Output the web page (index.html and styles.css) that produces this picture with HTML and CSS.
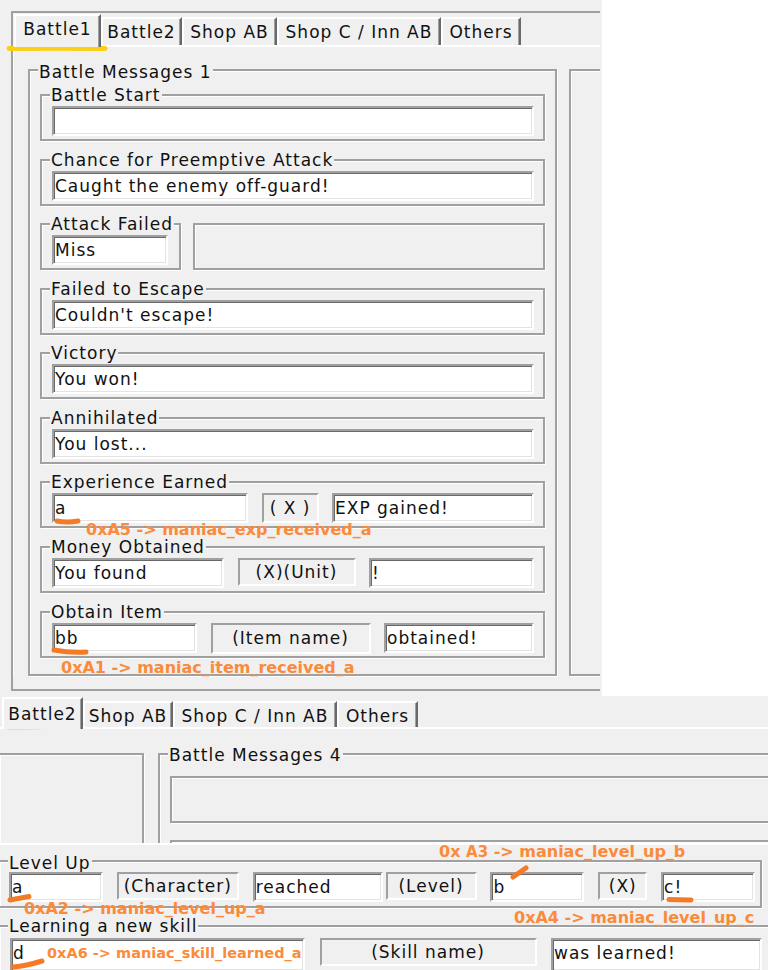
FILE: index.html
```html
<!DOCTYPE html>
<html>
<head>
<meta charset="utf-8">
<title>Battle Messages</title>
<link rel="stylesheet" href="styles.css">
</head>
<body>
<div class="canvas">

  <section class="shot shot1">
    <div class="frame">
      <div class="tabs tabs1">
        <div class="tab sel t1-battle1">Battle1</div>
        <div class="tab t1-battle2">Battle2</div>
        <div class="tab t1-shopab">Shop AB</div>
        <div class="tab t1-shopc">Shop C / Inn AB</div>
        <div class="tab t1-others">Others</div>
      </div>
      <div class="panel panel1">
        <div class="grp main">
          <div class="legend main-legend">Battle Messages 1</div>
          <div class="stack">
            <div class="grp inner">
              <div class="legend">Battle Start</div>
              <div class="row"><div class="edit full"></div></div>
            </div>
            <div class="grp inner">
              <div class="legend">Chance for Preemptive Attack</div>
              <div class="row"><div class="edit full">Caught the enemy off-guard!</div></div>
            </div>
            <div class="pair">
              <div class="grp inner attack">
                <div class="legend">Attack Failed</div>
                <div class="row"><div class="edit miss">Miss</div></div>
              </div>
              <div class="grp inner blank"></div>
            </div>
            <div class="grp inner">
              <div class="legend">Failed to Escape</div>
              <div class="row"><div class="edit full">Couldn't escape!</div></div>
            </div>
            <div class="grp inner">
              <div class="legend">Victory</div>
              <div class="row"><div class="edit full">You won!</div></div>
            </div>
            <div class="grp inner">
              <div class="legend">Annihilated</div>
              <div class="row"><div class="edit full">You lost...</div></div>
            </div>
            <div class="grp inner">
              <div class="legend">Experience Earned</div>
              <div class="row">
                <div class="edit exp-pre">a</div>
                <div class="static exp-x">( X )</div>
                <div class="edit exp-post">EXP gained!</div>
              </div>
            </div>
            <div class="grp inner">
              <div class="legend">Money Obtained</div>
              <div class="row">
                <div class="edit money-pre">You found</div>
                <div class="static money-x">(X)(Unit)</div>
                <div class="edit money-post">!</div>
              </div>
            </div>
            <div class="grp inner">
              <div class="legend">Obtain Item</div>
              <div class="row">
                <div class="edit item-pre">bb</div>
                <div class="static item-x">(Item name)</div>
                <div class="edit item-post">obtained!</div>
              </div>
            </div>
          </div>
        </div>
        <div class="grp side"></div>
      </div>
    </div>
  </section>

  <section class="shot shot2">
    <div class="tabs tabs2">
      <div class="tab sel t2-battle2">Battle2</div>
      <div class="tab t2-shopab">Shop AB</div>
      <div class="tab t2-shopc">Shop C / Inn AB</div>
      <div class="tab t2-others">Others</div>
    </div>
    <div class="panel panel2">
      <div class="grp left-box"></div>
      <div class="grp bm4">
        <div class="legend bm4-legend">Battle Messages 4</div>
        <div class="bm4-stack">
          <div class="grp bm4-inner"></div>
          <div class="grp bm4-inner"></div>
        </div>
      </div>
    </div>
  </section>

  <div class="strip"></div>

  <section class="shot shot3">
    <div class="grp levelup">
      <div class="legend lv-legend">Level Up</div>
      <div class="row lv-row">
        <div class="edit lv-a">a</div>
        <div class="static lv-char">(Character)</div>
        <div class="edit lv-reached">reached</div>
        <div class="static lv-level">(Level)</div>
        <div class="edit lv-b">b</div>
        <div class="static lv-x">(X)</div>
        <div class="edit lv-c">c!</div>
      </div>
    </div>
    <div class="grp skill">
      <div class="legend">Learning a new skill</div>
      <div class="row sk-row">
        <div class="edit sk-d">d</div>
        <div class="static sk-name">(Skill name)</div>
        <div class="edit sk-post">was learned!</div>
      </div>
    </div>
  </section>

  <svg class="marks" width="768" height="970" viewBox="0 0 768 970" aria-hidden="true">
    <g fill="none" stroke-linecap="round">
      <path class="hl" d="M9 48.5 Q56 48 105 48.5"/>
      <path class="hl" d="M9 727 Q52 727.5 81 723.5"/>
      <path class="om" d="M57 521 Q67 523 78 521"/>
      <path class="om" d="M54 650 Q70 653 86 652"/>
      <path class="om" d="M10 900 Q18 898.5 29 896.5"/>
      <path class="om" d="M513 877 L526 868"/>
      <path class="om" d="M669 899.5 L691 900"/>
      <path class="om" d="M13 967 Q26 966 42 961"/>
    </g>
  </svg>

  <div class="note n-exp">0xA5 -&gt; maniac_exp_received_a</div>
  <div class="note n-item">0xA1 -&gt; maniac_item_received_a</div>
  <div class="note n-lvb">0x <span class="a3">A3</span> -&gt; maniac_level_up_b</div>
  <div class="note n-lva">0xA2 -&gt; maniac_level_up_a</div>
  <div class="note n-lvc">0xA4 -&gt; maniac_level_up_c</div>
  <div class="note n-skill">0xA6 -&gt; maniac_skill_learned_a</div>

</div>
</body>
</html>
```

FILE: styles.css
```css
* { box-sizing: border-box; }

html, body {
  margin: 0;
  padding: 0;
  background: #ffffff;
}

body {
  font-family: "DejaVu Sans", Verdana, sans-serif;
  font-size: 17px;
  letter-spacing: 1px;
  color: #111111;
}

.canvas {
  position: relative;
  width: 768px;
  height: 970px;
  overflow: hidden;
}

.shot {
  background: #f0f0f0;
  overflow: hidden;
}

/* ---------- common controls ---------- */
.tabs {
  display: flex;
  align-items: flex-end;
}

.tab {
  height: 28px;
  padding-top: 2.5px;
  line-height: 20px;
  text-align: center;
  white-space: nowrap;
  background: #f0f0f0;
  border-top: 2px solid #ffffff;
  border-left: 2px solid #ffffff;
  border-right: 2px solid #696969;
  box-shadow: inset -1px 0 0 #a0a0a0;
}

.tab.sel {
  position: relative;
  z-index: 1;
  margin-bottom: -2px;
}

.grp {
  border: 2px solid #a0a0a0;
  box-shadow: inset 1px 1px 0 #ffffff, 1px 1px 0 #ffffff;
}

.legend {
  width: max-content;
  height: 20px;
  line-height: 20px;
  margin: -11px 0 0 8px;
  padding: 0 1px;
  background: #f0f0f0;
  white-space: nowrap;
}

.row {
  display: flex;
  align-items: flex-start;
  gap: 13.5px;
  margin: 1px 0 0 10px;
}

.edit {
  height: 30px;
  padding-left: 1px;
  line-height: 26px;
  background: #ffffff;
  border: 2px solid;
  border-color: #a0a0a0 #ffffff #ffffff #a0a0a0;
  box-shadow: inset 1px 1px 0 #696969, inset -1px -1px 0 #e3e3e3;
  white-space: nowrap;
  overflow: hidden;
}

.static {
  height: 29px;
  line-height: 25px;
  text-align: center;
  white-space: nowrap;
  border: 2px solid;
  border-color: #a0a0a0 #ffffff #ffffff #a0a0a0;
}

/* ---------- shot 1 ---------- */
.shot1 {
  width: 602px;
  height: 696px;
  padding: 11px 0 0 11px;
}

.frame {
  width: 589px;
  height: 680px;
  padding-top: 1px;
  border: 2px solid #a0a0a0;
  border-right: 0;
  overflow: hidden;
}

.tabs1 {
  height: 31px;
  padding-left: 1px;
}

.tabs1 .tab.sel { height: 33px; padding-top: 3px; }

.t1-battle1 { width: 87px; }
.t1-battle2 { width: 81px; }
.t1-shopab { width: 95px; }
.t1-shopc { width: 164px; }
.t1-others { width: 80px; }

.panel1 {
  display: flex;
  gap: 12px;
  padding: 22px 0 0 14px;
  border-top: 2px solid #ffffff;
  border-left: 1px solid #ffffff;
}

.main {
  width: 529px;
  height: 607px;
  flex: none;
}

.main-legend { margin-top: -9.5px; }

.side {
  width: 80px;
  height: 607px;
  flex: none;
}

.stack {
  display: flex;
  flex-direction: column;
  gap: 17.56px;
  margin: 12.7px 10px 0 10px;
}

.inner { height: 47px; }

.pair {
  display: flex;
  gap: 12px;
}

.attack { width: 141px; }
.blank { flex: 1; }

.full { width: 482px; }
.miss { width: 116px; }

.exp-pre { width: 196px; }
.exp-x { width: 57px; height: 30px; line-height: 26px; }
.exp-post { width: 202px; }

.money-pre { width: 172px; }
.money-x { width: 118px; height: 28px; line-height: 24px; }
.money-post { width: 165px; }

.item-pre { width: 145px; }
.item-x { width: 160px; height: 31px; line-height: 27px; }
.item-post { width: 150px; }

/* ---------- shot 2 ---------- */
.shot2 {
  width: 768px;
  height: 147px;
}

.tabs2 {
  height: 31px;
  padding: 1px 0 0 2px;
}

.tabs2 .tab { height: 26px; padding-top: 3px; }
.tabs2 .tab.sel { height: 32px; padding-top: 4.5px; }

.t2-battle2 { width: 81px; }
.t2-shopab { width: 90px; }
.t2-shopc { width: 164px; }
.t2-others { width: 81px; }

.panel2 {
  display: flex;
  gap: 14px;
  margin-left: -2px;
  padding-top: 24px;
  border-top: 2px solid #ffffff;
}

.left-box {
  width: 146px;
  height: 200px;
  flex: none;
}

.bm4 {
  width: 660px;
  height: 200px;
  flex: none;
}

.bm4-legend { margin-top: -10px; }

.bm4-stack {
  display: flex;
  flex-direction: column;
  gap: 17px;
  margin: 11px 0 0 10px;
}

.bm4-inner {
  width: 700px;
  height: 47px;
}

.strip {
  height: 2px;
  background: #ffffff;
}

/* ---------- shot 3 ---------- */
.shot3 {
  width: 768px;
  height: 125px;
  padding-top: 15px;
}

.levelup {
  width: 764px;
  height: 48px;
  margin-left: -2px;
}

.lv-legend { margin-top: -9px; }

.lv-row {
  gap: 13.85px;
  margin: -1px 0 0 9px;
}

.lv-a, .lv-b, .lv-c { width: 94px; }
.lv-char { width: 122px; height: 28px; line-height: 24px; }
.lv-reached { width: 130px; }
.lv-level { width: 91px; height: 28px; line-height: 24px; margin-left: -11px; }
.lv-x { width: 49px; height: 28px; line-height: 24px; }

.skill {
  width: 820px;
  height: 80px;
  margin: 17px 0 0 -2px;
}

.sk-row {
  gap: 14.5px;
  margin: 2px 0 0 10px;
}

.sk-d { width: 295px; height: 34px; }
.sk-name { width: 217px; height: 28px; line-height: 24px; }
.sk-post { width: 211px; height: 34px; }

/* ---------- annotations ---------- */
.marks {
  position: absolute;
  left: 0;
  top: 0;
  pointer-events: none;
}

.hl {
  stroke: #fccf14;
  stroke-width: 5;
}

.om {
  stroke: #f57a26;
  stroke-width: 5;
}

.note {
  position: absolute;
  font-family: "DejaVu Sans", Verdana, sans-serif;
  font-weight: bold;
  font-size: 16px;
  line-height: 14px;
  letter-spacing: 0;
  color: #fb8a3a;
  white-space: nowrap;
}

.n-exp { left: 86px; top: 523px; }
.n-item { left: 61px; top: 660.5px; }
.n-lvb { left: 439px; top: 844.5px; }
.n-lva { left: 24px; top: 901.5px; }
.n-lvc { left: 514px; top: 910.5px; }
.n-skill { left: 47px; top: 947px; font-size: 14.5px; line-height: 13px; }

.a3 { font-size: 15px; }
```
